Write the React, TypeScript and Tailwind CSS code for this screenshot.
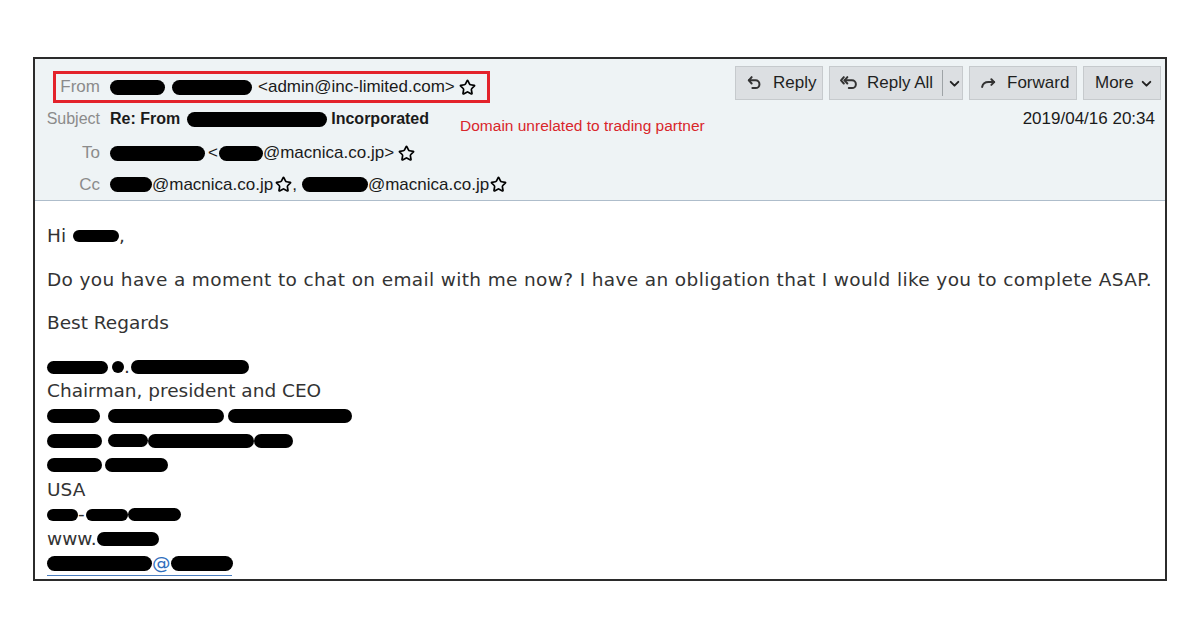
import { Star } from 'lucide-react';

function Blot({ className = '' }: { className?: string }) {
  return <span className={`inline-block shrink-0 rounded-full bg-black ${className}`} />;
}

function Outline() {
  return <Star size={17} strokeWidth={2.4} className="shrink-0 text-black" />;
}

function ReplyIcon() {
  return (
    <svg width="17" height="17" viewBox="0 0 24 24" fill="none" stroke="#333" strokeWidth="2.8" strokeLinecap="round" strokeLinejoin="round">
      <path d="M8 3 4 7.5 8 12" />
      <path d="M4 7.5h9.5a5.5 5.5 0 0 1 0 11H9" />
    </svg>
  );
}

function ReplyAllIcon() {
  return (
    <svg width="21" height="17" viewBox="0 0 28 24" fill="none" stroke="#333" strokeWidth="2.8" strokeLinecap="round" strokeLinejoin="round">
      <path d="M6 3 2 7.5 6 12" />
      <path d="M11 3 7 7.5 11 12" />
      <path d="M7 7.5h10.5a5.5 5.5 0 0 1 0 11H13" />
    </svg>
  );
}

function ForwardIcon() {
  return (
    <svg width="17" height="17" viewBox="0 0 24 24" fill="none" stroke="#333" strokeWidth="2.8" strokeLinecap="round" strokeLinejoin="round">
      <path d="M3 17c1-5 4-7 9-7h8" />
      <path d="M16 6l4 4-4 4" />
    </svg>
  );
}

function Chevron() {
  return (
    <svg width="13" height="13" viewBox="0 0 24 24" fill="none" stroke="#222" strokeWidth="3.6" strokeLinecap="round" strokeLinejoin="round">
      <path d="M5 9l7 7 7-7" />
    </svg>
  );
}

const btn = 'flex h-[34px] items-center border border-[#c6cacd] bg-[#dcdfe2] text-[17px] text-[#1f1f1f]';

export default function App() {
  return (
    <div className="min-h-[627px] bg-white pl-[33px] pt-[57px]">
      <div className="w-[1134px] border-2 border-[#2b2b2b] bg-white">
        {/* header */}
        <div
          className="flex justify-between border-b border-[#aebdcb] bg-[#eef3f5] text-[#1a1a1a]"
          style={{ fontFamily: "'Liberation Sans', Arial, sans-serif" }}
        >
          <div className="flex flex-col pl-[8px] pt-[12px] text-[17px]">
            <div className="ml-[10px] flex h-[32px] w-[437px] items-center border-[3px] border-[#e3222b]">
              <span className="w-[44px] text-right text-[#8b8b8b]">From</span>
              <Blot className="ml-[10px] h-[15px] w-[55px]" />
              <Blot className="ml-[7px] h-[15px] w-[80px]" />
              <span className="ml-[6px] whitespace-nowrap">&lt;admin@inc-limited.com&gt;</span>
              <span className="ml-[4px]"><Outline /></span>
            </div>
            <div className="flex h-[32px] items-center">
              <span className="w-[57px] text-right text-[16px] text-[#8b8b8b]">Subject</span>
              <span className="ml-[10px] text-[16px] font-bold">Re: From</span>
              <Blot className="ml-[7px] h-[15px] w-[140px]" />
              <span className="ml-[4px] text-[16px] font-bold">Incorporated</span>
              <span className="ml-[31px] translate-y-[7px] whitespace-nowrap text-[15.5px] text-[#d9262b]">
                Domain unrelated to trading partner
              </span>
            </div>
            <div className="mt-[2px] flex h-[32px] items-center">
              <span className="w-[57px] text-right text-[#8b8b8b]">To</span>
              <Blot className="ml-[10px] h-[15px] w-[95px]" />
              <span className="ml-[3px]">&lt;</span>
              <Blot className="ml-[1px] h-[15px] w-[44px]" />
              <span className="whitespace-nowrap">@macnica.co.jp&gt;</span>
              <span className="ml-[4px]"><Outline /></span>
            </div>
            <div className="flex h-[31px] items-center">
              <span className="w-[57px] text-right text-[#8b8b8b]">Cc</span>
              <Blot className="ml-[10px] h-[15px] w-[42px]" />
              <span className="whitespace-nowrap">@macnica.co.jp</span>
              <span className="ml-[2px]"><Outline /></span>
              <span>,</span>
              <Blot className="ml-[5px] h-[15px] w-[66px]" />
              <span className="whitespace-nowrap">@macnica.co.jp</span>
              <span className="ml-[1px]"><Outline /></span>
            </div>
          </div>

          <div className="flex flex-col items-end pr-[4px] pt-[7px]">
            <div className="flex gap-[6px]">
              <button className={`${btn} w-[88px] pl-[10px]`}>
                <ReplyIcon />
                <span className="ml-[10px]">Reply</span>
              </button>
              <button className={`${btn} w-[134px] pl-[9px]`}>
                <ReplyAllIcon />
                <span className="ml-[7px]">Reply All</span>
                <span className="ml-[9px] h-[26px] w-px bg-[#9ea3a6]" />
                <span className="ml-[5px]"><Chevron /></span>
              </button>
              <button className={`${btn} w-[108px] pl-[10px]`}>
                <ForwardIcon />
                <span className="ml-[10px]">Forward</span>
              </button>
              <button className={`${btn} w-[78px] pl-[11px]`}>
                <span>More</span>
                <span className="ml-[6px]"><Chevron /></span>
              </button>
            </div>
            <div className="mr-[6px] mt-[8px] text-[17px] leading-[22px] text-[#1a1a1a]">2019/04/16 20:34</div>
          </div>
        </div>

        {/* body */}
        <div
          className="flex h-[378px] flex-col pl-[12px] pt-[23px] text-[18.5px] leading-[24.6px] text-[#333]"
          style={{ fontFamily: "'DejaVu Sans', Verdana, sans-serif" }}
        >
          <div className="mb-[19px] flex items-center">
            <span>Hi</span>
            <Blot className="ml-[7px] h-[12px] w-[46px]" />
            <span>,</span>
          </div>
          <div className="mb-[19px] whitespace-nowrap tracking-[0.36px]">
            Do you have a moment to chat on email with me now? I have an obligation that I would like you to complete ASAP.
          </div>
          <div className="mb-[19px]">Best Regards</div>
          <div className="flex h-[24.6px] items-center">
            <Blot className="h-[13px] w-[61px]" />
            <Blot className="ml-[4px] h-[12px] w-[12px]" />
            <span>.</span>
            <Blot className="ml-[1px] h-[14px] w-[118px]" />
          </div>
          <div>Chairman, president and CEO</div>
          <div className="flex h-[24.6px] items-center">
            <Blot className="h-[14px] w-[53px]" />
            <Blot className="ml-[8px] h-[14px] w-[116px]" />
            <Blot className="ml-[4px] h-[14px] w-[124px]" />
          </div>
          <div className="flex h-[24.6px] items-center">
            <Blot className="h-[14px] w-[55px]" />
            <Blot className="ml-[6px] h-[13px] w-[40px]" />
            <Blot className="h-[14px] w-[106px]" />
            <Blot className="h-[14px] w-[39px]" />
          </div>
          <div className="flex h-[24.6px] items-center">
            <Blot className="h-[14px] w-[55px]" />
            <Blot className="ml-[3px] h-[14px] w-[63px]" />
          </div>
          <div>USA</div>
          <div className="flex h-[24.6px] items-center">
            <Blot className="h-[12px] w-[31px]" />
            <span>-</span>
            <Blot className="ml-[1px] h-[12px] w-[42px]" />
            <Blot className="h-[13px] w-[53px]" />
          </div>
          <div className="flex h-[24.6px] items-center">
            <span>www.</span>
            <Blot className="h-[14px] w-[62px]" />
          </div>
          <div className="flex h-[24.6px] w-[185px] items-center border-b border-[#4a7ec0]">
            <Blot className="h-[15px] w-[105px]" />
            <span className="text-[#2f6ebd]">@</span>
            <Blot className="h-[15px] w-[62px]" />
          </div>
        </div>
      </div>
    </div>
  );
}
